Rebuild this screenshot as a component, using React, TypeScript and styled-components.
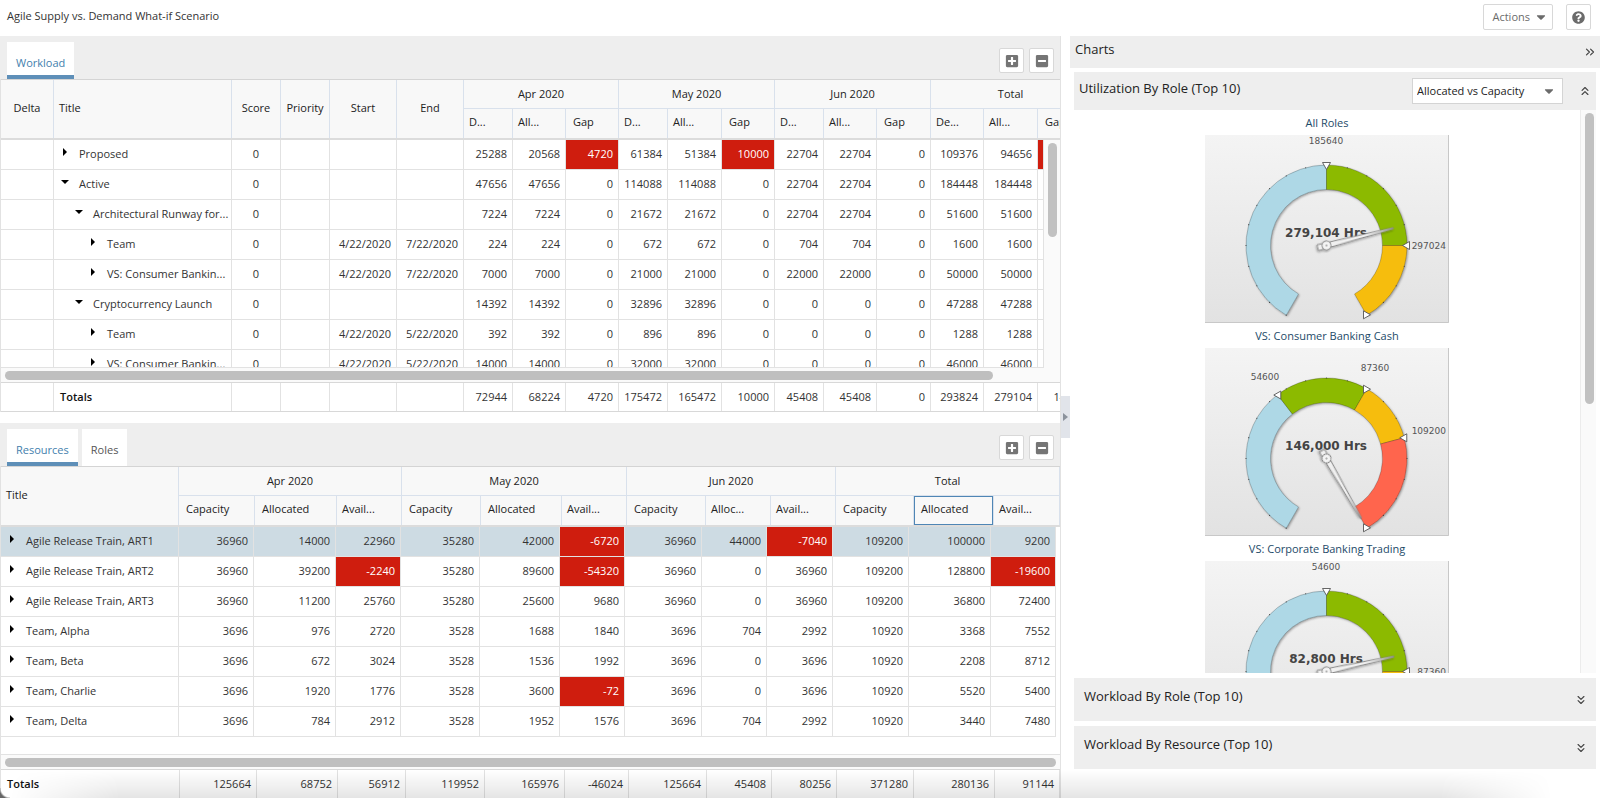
import React from 'react';
import styled, { createGlobalStyle, css } from 'styled-components';
import { ChevronsDown, ChevronsRight, ChevronsUp } from 'lucide-react';
import { FaCaretDown, FaMinusSquare, FaPlusSquare, FaQuestionCircle } from 'react-icons/fa';

const line = '#e2e2e2';
const headLine = '#d9e1ec';
const grey = '#eeeeee';

const GlobalStyle = createGlobalStyle`
  * { box-sizing: border-box; }
  body { margin: 0; background: #fff; }
  button, select { font: inherit; color: inherit; }
`;

/* ---------- page ---------- */

const Page = styled.div`
  position: relative;
  display: grid;
  grid-template-rows: 36px minmax(0, 1fr);
  height: 100vh;
  font: 11px/16px 'Open Sans', 'Liberation Sans', sans-serif;
  color: #333;
  overflow: hidden;
`;

const BottomShade = styled.div`
  position: absolute;
  inset: auto 0 0 0;
  height: 28px;
  pointer-events: none;
  background: linear-gradient(to bottom, rgba(0, 0, 0, 0), rgba(0, 0, 0, 0.1));
  mask-image: linear-gradient(to right, transparent 10px, #000 120px, #000 90%, transparent 97%);
`;

const CornerShade = styled.div`
  position: absolute;
  left: 0;
  bottom: 0;
  width: 10px;
  height: 10px;
  pointer-events: none;
  background: radial-gradient(circle at 100% 0, transparent 9px, #666 11px);
`;

const TopBar = styled.header`
  display: flex;
  align-items: flex-start;
  justify-content: space-between;
  padding: 4px 9px 0 7px;
`;

const PageTitle = styled.h1`
  margin: 0;
  font-size: 11px;
  font-weight: 400;
  line-height: 24px;
`;

const TopActions = styled.div`
  display: flex;
  gap: 13px;
`;

const OutlineButton = styled.button`
  display: inline-flex;
  align-items: center;
  justify-content: center;
  gap: 4px;
  min-width: 25px;
  height: 26px;
  padding: 0;
  border: 1px solid #d8d8d8;
  border-radius: 2px;
  background: #fff;
  color: #6b6b6b;
`;

const ActionsButton = styled(OutlineButton)`
  padding: 0 4px 0 8px;
`;

const Columns = styled.main`
  display: grid;
  grid-template-columns: minmax(0, 2fr) 10px minmax(0, 1fr);
  min-height: 0;
`;

const LeftPane = styled.div`
  display: flex;
  flex-direction: column;
  gap: 11px;
  min-height: 0;
`;

const Splitter = styled.div`
  display: flex;
  align-items: center;
  border-left: 1px solid ${line};
`;

const SplitterHandle = styled.button`
  display: flex;
  align-items: center;
  justify-content: center;
  width: 9px;
  height: 42px;
  padding: 0;
  border: 0;
  background: #e1e4ea;
  color: #8b929c;
`;

/* ---------- grid panels ---------- */

const Panel = styled.section<{ $grow?: boolean }>`
  display: flex;
  flex-direction: column;
  min-height: 0;
  ${(p) => p.$grow && 'flex: 1;'}
`;

const PanelBar = styled.div`
  display: flex;
  justify-content: space-between;
  height: 43px;
  padding: 6px 6px 0 7px;
  background: ${grey};
`;

const Tabs = styled.div`
  display: flex;
  gap: 4px;
`;

const Tab = styled.button<{ $active?: boolean }>`
  padding: 8px 9px 0;
  border: 0;
  border-bottom: 4px solid ${(p) => (p.$active ? '#5e8fb8' : '#fff')};
  background: #fff;
  color: ${(p) => (p.$active ? '#4380ad' : '#555')};
`;

const PanelTools = styled.div`
  display: flex;
  gap: 5px;
  padding-top: 6px;

  ${OutlineButton} {
    height: 25px;
    color: #757575;
  }
`;

const GridFrame = styled.div`
  display: flex;
  flex: 1;
  flex-direction: column;
  min-height: 0;
  border-left: 1px solid ${line};
  overflow: hidden;
`;

const GridTable = styled.table<{ $width?: number }>`
  width: ${(p) => (p.$width ? `${p.$width}px` : '100%')};
  flex: none;
  table-layout: fixed;
  border-collapse: separate;
  border-spacing: 0;
`;

const HeadTable = styled(GridTable)`
  border-top: 1px solid #d4d4d4;
  border-bottom: 2px solid #dcdcdc;
  background: #f8f8f8;
`;

const HeadCell = styled.th<{ $align?: string; $pad?: number; $focus?: boolean }>`
  height: 29px;
  padding: 0 2px 2px ${(p) => p.$pad ?? 2}px;
  border-right: 1px solid ${headLine};
  text-align: ${(p) => p.$align ?? 'left'};
  font-weight: 400;
  color: #222;
  white-space: nowrap;
  ${(p) => p.$focus && css`box-shadow: inset 0 0 0 1px #4f86b5;`}
`;

const SubCell = styled(HeadCell)`
  padding-bottom: 4px;
`;

const GroupCell = styled(HeadCell)`
  padding-bottom: 0;
  border-bottom: 1px solid ${headLine};
`;

const Cell = styled.td<{ $align?: string; $alert?: boolean }>`
  height: 30px;
  padding: 0 5px 2px;
  border-right: 1px solid ${line};
  border-bottom: 1px solid ${line};
  text-align: ${(p) => p.$align ?? 'right'};
  white-space: nowrap;
  overflow: hidden;
  ${(p) => p.$alert && css`
    background: #cf1d0e;
    background-clip: padding-box;
    color: #fff;
  `}
`;

const BodyRow = styled.tr<{ $selected?: boolean }>`
  ${(p) => p.$selected && 'background: #cddbe3;'}
`;

const TitleCell = styled(Cell)<{ $level: number }>`
  padding: 0 0 2px ${(p) => 5 + p.$level * 14}px;
  text-align: left;
`;

const TitleLine = styled.span`
  display: flex;
  align-items: center;
  gap: 9px;
`;

const Expander = styled.button`
  display: flex;
  justify-content: center;
  width: 11px;
  height: 12px;
  padding: 0;
  border: 0;
  background: none;
  color: #000;
`;

const WorkloadBody = styled.div`
  display: grid;
  grid-template-columns: minmax(0, 1fr) 16px;
  height: 228px;
`;

const BodyClip = styled.div`
  overflow: hidden;
  border-right: 1px solid ${line};
  border-bottom: 1px solid ${line};
`;

const VTrack = styled.div`
  padding: 3px 3px 0 4px;
  background: #fafafa;
`;

const VThumb = styled.div<{ $size: number }>`
  width: 9px;
  height: ${(p) => p.$size}px;
  border-radius: 5px;
  background: #c1c1c1;
`;

const ResourceBody = styled.div`
  flex: 1;
  min-height: 0;
  padding-right: 4px;
  overflow: hidden;
  border-bottom: 1px solid ${line};
`;

const HTrack = styled.div`
  flex: none;
  height: 14px;
  padding: 3px 4px 0;
  background: #fafafa;
`;

const HThumb = styled.div<{ $size: string }>`
  width: ${(p) => p.$size};
  height: 9px;
  border-radius: 5px;
  background: #bfbfbf;
`;

const TotalsTable = styled(GridTable)<{ $last?: boolean }>`
  border-top: 1px solid #d8d8d8;
  border-bottom: ${(p) => (p.$last ? 0 : 1)}px solid #d8d8d8;
`;

const TotalCell = styled(Cell)`
  height: 28px;
  padding-bottom: 0;
  border-bottom: 0;
`;

const TotalLabel = styled(TotalCell)`
  padding-left: 6px;
  text-align: left;
  font-weight: 600;
  color: #111;
`;

/* ---------- charts ---------- */

const ChartsPane = styled.aside`
  display: flex;
  flex-direction: column;
  min-height: 0;
  color: #222;
`;

const ChartsBar = styled.div`
  display: flex;
  align-items: center;
  justify-content: space-between;
  height: 32px;
  padding: 0 3px 0 5px;
  background: ${grey};
`;

const Heading = styled.h2`
  margin: 0;
  padding-bottom: 7px;
  font-size: 13px;
  font-weight: 400;
  line-height: 20px;
`;

const ChartGroups = styled.div`
  display: flex;
  flex: 1;
  flex-direction: column;
  gap: 5px;
  min-height: 0;
  padding: 4px 4px 29px;
`;

const ChartGroup = styled.section<{ $open?: boolean }>`
  display: flex;
  flex-direction: column;
  min-height: 0;
  ${(p) => p.$open ? 'flex: 1;' : 'flex: none;'}
`;

const GroupBar = styled.div<{ $open?: boolean }>`
  display: flex;
  align-items: center;
  flex: none;
  height: ${(p) => (p.$open ? 38 : 43)}px;
  padding: ${(p) => (p.$open ? '0 4px 0 5px' : '0 8px 0 10px')};
  background: ${grey};

  ${Heading} { flex: 1; }
`;

const IconButton = styled.button`
  display: flex;
  padding: 0;
  border: 0;
  background: none;
  color: #444;
`;

const SelectWrap = styled.label`
  display: grid;
  align-items: center;
  width: 151px;
  margin-right: 15px;

  > * { grid-area: 1 / 1; }
  > svg { justify-self: end; margin-right: 7px; pointer-events: none; color: #6b6b6b; }
`;

const Select = styled.select`
  width: 100%;
  height: 26px;
  padding: 0 4px;
  border: 1px solid #d4d4d4;
  border-radius: 0;
  background: #fff;
  color: #222;
  appearance: none;
`;

const GaugeArea = styled.div`
  display: grid;
  grid-template-columns: minmax(0, 1fr) 16px;
  flex: 1;
  min-height: 0;
`;

const GaugeList = styled.div`
  display: flex;
  flex-direction: column;
  align-items: center;
  min-height: 0;
  overflow: hidden;
`;

const GaugeTrack = styled(VTrack)`
  border-left: 1px solid #ececec;
`;

const GaugeTitle = styled.h3`
  flex: none;
  margin: 0;
  font-size: 11px;
  font-weight: 400;
  line-height: 25px;
  color: #1d4a68;
`;

const GaugeSvg = styled.svg`
  flex: none;
  width: 244px;
  height: 188px;
  font-family: 'DejaVu Sans', sans-serif;
`;

/* ---------- data ---------- */

type WorkRow = { title: string; level: number; open?: boolean; start?: string; end?: string; v: number[]; alerts?: number[] };

const workWidths = [53, 178, 49, 49, 67, 67, 49, 53, 53, 49, 54, 53, 49, 53, 54, 53, 54, 53];
const workRows: WorkRow[] = [
  { title: 'Proposed', level: 0, v: [25288, 20568, 4720, 61384, 51384, 10000, 22704, 22704, 0, 109376, 94656, 14720], alerts: [2, 5, 11] },
  { title: 'Active', level: 0, open: true, v: [47656, 47656, 0, 114088, 114088, 0, 22704, 22704, 0, 184448, 184448, 0] },
  { title: 'Architectural Runway for...', level: 1, open: true, v: [7224, 7224, 0, 21672, 21672, 0, 22704, 22704, 0, 51600, 51600, 0] },
  { title: 'Team', level: 2, start: '4/22/2020', end: '7/22/2020', v: [224, 224, 0, 672, 672, 0, 704, 704, 0, 1600, 1600, 0] },
  { title: 'VS: Consumer Bankin...', level: 2, start: '4/22/2020', end: '7/22/2020', v: [7000, 7000, 0, 21000, 21000, 0, 22000, 22000, 0, 50000, 50000, 0] },
  { title: 'Cryptocurrency Launch', level: 1, open: true, v: [14392, 14392, 0, 32896, 32896, 0, 0, 0, 0, 47288, 47288, 0] },
  { title: 'Team', level: 2, start: '4/22/2020', end: '5/22/2020', v: [392, 392, 0, 896, 896, 0, 0, 0, 0, 1288, 1288, 0] },
  { title: 'VS: Consumer Bankin...', level: 2, start: '4/22/2020', end: '5/22/2020', v: [14000, 14000, 0, 32000, 32000, 0, 0, 0, 0, 46000, 46000, 0] },
];
const workTotals = [72944, 68224, 4720, 175472, 165472, 10000, 45408, 45408, 0, 293824, 279104, 14720];

const resHeadWidths = [178, 76, 82, 65, 79, 81, 65, 79, 65, 65, 78, 80, 66];
const resBodyWidths = [178, 75, 82, 65, 79, 80, 65, 77, 65, 66, 76, 82, 65];
const resTotalWidths = [179, 77, 81, 68, 79, 80, 64, 78, 65, 65, 77, 81, 65];
const resRows: [string, number[]][] = [
  ['Agile Release Train, ART1', [36960, 14000, 22960, 35280, 42000, -6720, 36960, 44000, -7040, 109200, 100000, 9200]],
  ['Agile Release Train, ART2', [36960, 39200, -2240, 35280, 89600, -54320, 36960, 0, 36960, 109200, 128800, -19600]],
  ['Agile Release Train, ART3', [36960, 11200, 25760, 35280, 25600, 9680, 36960, 0, 36960, 109200, 36800, 72400]],
  ['Team, Alpha', [3696, 976, 2720, 3528, 1688, 1840, 3696, 704, 2992, 10920, 3368, 7552]],
  ['Team, Beta', [3696, 672, 3024, 3528, 1536, 1992, 3696, 0, 3696, 10920, 2208, 8712]],
  ['Team, Charlie', [3696, 1920, 1776, 3528, 3600, -72, 3696, 0, 3696, 10920, 5520, 5400]],
  ['Team, Delta', [3696, 784, 2912, 3528, 1952, 1576, 3696, 704, 2992, 10920, 3440, 7480]],
];
const resTotals = [125664, 68752, 56912, 119952, 165976, -46024, 125664, 45408, 80256, 371280, 280136, 91144];

const periods = ['Apr 2020', 'May 2020', 'Jun 2020', 'Total'];
const workSubs = ['D...', 'All...', 'Gap', 'D...', 'All...', 'Gap', 'D...', 'All...', 'Gap', 'De...', 'All...', 'Gap'];
const resSubs = ['Capacity', 'Allocated', 'Avail...', 'Capacity', 'Allocated', 'Avail...', 'Capacity', 'Alloc...', 'Avail...', 'Capacity', 'Allocated', 'Avail...'];
const subPad = (label: string) => (label.endsWith('...') ? 5 : 7);

/* ---------- pieces ---------- */

const Cols = ({ widths }: { widths: number[] }) => (
  <colgroup>{widths.map((w, i) => <col key={i} width={w} />)}</colgroup>
);

const Arrow = ({ open }: { open?: boolean }) => (
  <svg width="10" height="10" viewBox="0 0 10 10" aria-hidden="true">
    <path d={open ? 'M1 2H9L5 6Z' : 'M3 0V8L7 4Z'} fill="currentColor" />
  </svg>
);

const TitleWithArrow = ({ title, open }: { title: string; open?: boolean }) => (
  <TitleLine>
    <Expander aria-label={`${open ? 'Collapse' : 'Expand'} ${title}`}><Arrow open={open} /></Expander>
    {title}
  </TitleLine>
);

const Tools = () => (
  <PanelTools>
    <OutlineButton aria-label="Expand all"><FaPlusSquare size={14} /></OutlineButton>
    <OutlineButton aria-label="Collapse all"><FaMinusSquare size={14} /></OutlineButton>
  </PanelTools>
);

function WorkloadPanel() {
  return (
    <Panel>
      <PanelBar>
        <Tabs role="tablist"><Tab role="tab" aria-selected="true" $active>Workload</Tab></Tabs>
        <Tools />
      </PanelBar>
      <GridFrame>
        <HeadTable $width={1090}>
          <Cols widths={workWidths} />
          <thead>
            <tr>
              {['Delta', 'Title', 'Score', 'Priority', 'Start', 'End'].map((h) => (
                <HeadCell key={h} rowSpan={2} $align={h === 'Title' ? 'left' : 'center'} $pad={h === 'Title' ? 5 : 2}>{h}</HeadCell>
              ))}
              {periods.map((p) => <GroupCell key={p} colSpan={3} $align="center">{p}</GroupCell>)}
            </tr>
            <tr>{workSubs.map((s, i) => <SubCell key={i} $pad={subPad(s)}>{s}</SubCell>)}</tr>
          </thead>
        </HeadTable>
        <WorkloadBody>
          <BodyClip>
            <GridTable $width={1090}>
              <Cols widths={workWidths} />
              <tbody>
                {workRows.map((r, i) => (
                  <BodyRow key={i}>
                    <Cell />
                    <TitleCell $level={r.level}><TitleWithArrow title={r.title} open={r.open} /></TitleCell>
                    <Cell $align="center">0</Cell>
                    <Cell />
                    <Cell>{r.start}</Cell>
                    <Cell>{r.end}</Cell>
                    {r.v.map((n, j) => <Cell key={j} $alert={r.alerts?.includes(j)}>{n}</Cell>)}
                  </BodyRow>
                ))}
              </tbody>
            </GridTable>
          </BodyClip>
          <VTrack><VThumb $size={94} /></VTrack>
        </WorkloadBody>
        <HTrack><HThumb $size="94%" /></HTrack>
        <TotalsTable $width={1090}>
          <Cols widths={workWidths} />
          <tbody>
            <tr>
              <TotalCell />
              <TotalLabel>Totals</TotalLabel>
              <TotalCell /><TotalCell /><TotalCell /><TotalCell />
              {workTotals.map((n, i) => <TotalCell key={i}>{n}</TotalCell>)}
            </tr>
          </tbody>
        </TotalsTable>
      </GridFrame>
    </Panel>
  );
}

function ResourcesPanel() {
  return (
    <Panel $grow>
      <PanelBar>
        <Tabs role="tablist">
          <Tab role="tab" aria-selected="true" $active>Resources</Tab>
          <Tab role="tab" aria-selected="false">Roles</Tab>
        </Tabs>
        <Tools />
      </PanelBar>
      <GridFrame>
        <HeadTable>
          <Cols widths={resHeadWidths} />
          <thead>
            <tr>
              <HeadCell rowSpan={2} $pad={5}>Title</HeadCell>
              {periods.map((p) => <GroupCell key={p} colSpan={3} $align="center">{p}</GroupCell>)}
            </tr>
            <tr>{resSubs.map((s, i) => <SubCell key={i} $pad={subPad(s)} $focus={i === 10}>{s}</SubCell>)}</tr>
          </thead>
        </HeadTable>
        <ResourceBody>
          <GridTable>
            <Cols widths={resBodyWidths} />
            <tbody>
              {resRows.map(([title, v], i) => (
                <BodyRow key={title} $selected={i === 0}>
                  <TitleCell $level={0}><TitleWithArrow title={title} /></TitleCell>
                  {v.map((n, j) => <Cell key={j} $alert={n < 0}>{n}</Cell>)}
                </BodyRow>
              ))}
            </tbody>
          </GridTable>
        </ResourceBody>
        <HTrack><HThumb $size="100%" /></HTrack>
        <TotalsTable $last>
          <Cols widths={resTotalWidths} />
          <tbody>
            <tr>
              <TotalLabel>Totals</TotalLabel>
              {resTotals.map((n, i) => <TotalCell key={i}>{n}</TotalCell>)}
            </tr>
          </tbody>
        </TotalsTable>
      </GridFrame>
    </Panel>
  );
}

/* ---------- gauge ---------- */

const CX = 121.5, CY = 110.5, RO = 80.5, RI = 56;
const colors = ['#aed8e6', '#8cba00', '#f6bd0c', '#ff654e'];

const at = (deg: number, r: number) => {
  const a = (deg * Math.PI) / 180;
  return [CX + r * Math.sin(a), CY - r * Math.cos(a)];
};

const arc = (a: number, b: number) => {
  const big = b - a > 180 ? 1 : 0;
  return `M${at(a, RO)}A${RO} ${RO} 0 ${big} 1 ${at(b, RO)}L${at(b, RI)}A${RI} ${RI} 0 ${big} 0 ${at(a, RI)}Z`;
};

const markers: Record<string, string> = {
  down: 'M-4 -3H4L0 4Z',
  left: 'M3 -4V4L-4 0Z',
  right: 'M-3 -4V4L4 0Z',
};

type GaugeSpec = {
  title: string;
  value: string;
  needle: number;
  stops: number[];
  marks: string[];
  labels: { x: number; y: number; anchor: 'start' | 'middle' | 'end'; text: string }[];
};

const gauges: GaugeSpec[] = [
  {
    title: 'All Roles', value: '279,104 Hrs', needle: 75.5, stops: [0, 90, 150], marks: ['down', 'left', 'right'],
    labels: [{ x: 121, y: 9, anchor: 'middle', text: '185640' }, { x: 241, y: 114, anchor: 'end', text: '297024' }],
  },
  {
    title: 'VS: Consumer Banking Cash', value: '146,000 Hrs', needle: 150, stops: [-37.5, 30, 75, 150], marks: ['left', 'right', 'left', 'right'],
    labels: [
      { x: 60, y: 32, anchor: 'middle', text: '54600' },
      { x: 170, y: 23, anchor: 'middle', text: '87360' },
      { x: 241, y: 86, anchor: 'end', text: '109200' },
    ],
  },
  {
    title: 'VS: Corporate Banking Trading', value: '82,800 Hrs', needle: 77.5, stops: [0, 90, 150], marks: ['down', 'left', 'right'],
    labels: [{ x: 121, y: 9, anchor: 'middle', text: '54600' }, { x: 241, y: 114, anchor: 'end', text: '87360' }],
  },
];

function Gauge({ spec, id }: { spec: GaugeSpec; id: string }) {
  const ticks = Array.from({ length: 21 }, (_, i) => -150 + i * 15);
  return (
    <GaugeSvg viewBox="0 0 244 188" role="img" aria-label={`${spec.title}: ${spec.value}`}>
      <defs>
        <linearGradient id={`${id}-bg`} x1="0" y1="0" x2="0" y2="1">
          <stop offset="0" stopColor="#f4f4f4" />
          <stop offset="1" stopColor="#e2e2e2" />
        </linearGradient>
        <filter id={`${id}-shadow`} x="-20%" y="-20%" width="140%" height="140%">
          <feDropShadow dx="1" dy="1" stdDeviation="1" floodOpacity="0.35" />
        </filter>
      </defs>
      <rect width="244" height="188" fill={`url(#${id}-bg)`} />
      <path d="M243.500 0V187.500H0" fill="none" stroke="#c8c8c8" />
      <g filter={`url(#${id}-shadow)`}>
        {spec.stops.map((s, i) => (
          <path key={s} d={arc(i ? spec.stops[i - 1] : -150, s)} fill={colors[i]} stroke="#000" strokeOpacity="0.3" strokeWidth="0.7" />
        ))}
      </g>
      {ticks.map((t) => {
        const [x, y] = at(t, RO);
        return <circle key={t} cx={x} cy={y} r="0.6" fill="#444" />;
      })}
      {spec.stops.map((s, i) => {
        const [x, y] = at(s, 80);
        return <path key={s} d={markers[spec.marks[i]]} transform={`translate(${x} ${y})`} fill="#fff" stroke="#555" strokeWidth="0.9" />;
      })}
      {spec.labels.map((l) => (
        <text key={l.text} x={l.x} y={l.y} textAnchor={l.anchor} fontSize="9" fill="#555">{l.text}</text>
      ))}
      <text x="121" y="102" textAnchor="middle" fontSize="12" fontWeight="700" fill="#444">{spec.value}</text>
      <g transform={`translate(${CX} ${CY}) rotate(${spec.needle})`} filter={`url(#${id}-shadow)`}>
        <path d="M-3 9H3L0.600 -69H-0.600Z" fill="#f0f0f0" stroke="#808080" strokeWidth="0.9" />
        <circle r="4.500" fill="#f4f4f4" stroke="#808080" strokeWidth="1" />
        <circle r="1" fill="#999" />
      </g>
    </GaugeSvg>
  );
}

function Charts() {
  return (
    <ChartsPane>
      <ChartsBar>
        <Heading>Charts</Heading>
        <IconButton aria-label="Collapse charts"><ChevronsRight size={14} /></IconButton>
      </ChartsBar>
      <ChartGroups>
        <ChartGroup $open>
          <GroupBar $open>
            <Heading>Utilization By Role (Top 10)</Heading>
            <SelectWrap>
              <Select aria-label="Measure" defaultValue="Allocated vs Capacity">
                <option>Allocated vs Capacity</option>
              </Select>
              <FaCaretDown size={14} />
            </SelectWrap>
            <IconButton aria-label="Collapse Utilization By Role"><ChevronsUp size={14} /></IconButton>
          </GroupBar>
          <GaugeArea>
            <GaugeList>
              {gauges.map((g, i) => (
                <React.Fragment key={g.title}>
                  <GaugeTitle>{g.title}</GaugeTitle>
                  <Gauge spec={g} id={`gauge${i}`} />
                </React.Fragment>
              ))}
            </GaugeList>
            <GaugeTrack><VThumb $size={291} /></GaugeTrack>
          </GaugeArea>
        </ChartGroup>
        {['Workload By Role (Top 10)', 'Workload By Resource (Top 10)'].map((t) => (
          <ChartGroup key={t}>
            <GroupBar>
              <Heading>{t}</Heading>
              <IconButton aria-label={`Expand ${t}`}><ChevronsDown size={14} /></IconButton>
            </GroupBar>
          </ChartGroup>
        ))}
      </ChartGroups>
    </ChartsPane>
  );
}

export default function App() {
  return (
    <>
      <GlobalStyle />
      <Page>
        <TopBar>
          <PageTitle>Agile Supply vs. Demand What-if Scenario</PageTitle>
          <TopActions>
            <ActionsButton>Actions <FaCaretDown size={14} /></ActionsButton>
            <OutlineButton aria-label="Help"><FaQuestionCircle size={13} /></OutlineButton>
          </TopActions>
        </TopBar>
        <Columns>
          <LeftPane>
            <WorkloadPanel />
            <ResourcesPanel />
          </LeftPane>
          <Splitter>
            <SplitterHandle aria-label="Collapse charts panel">
              <svg width="5" height="8" viewBox="0 0 5 8"><path d="M0 0V8L5 4Z" fill="currentColor" /></svg>
            </SplitterHandle>
          </Splitter>
          <Charts />
        </Columns>
        <BottomShade />
        <CornerShade />
      </Page>
    </>
  );
}
